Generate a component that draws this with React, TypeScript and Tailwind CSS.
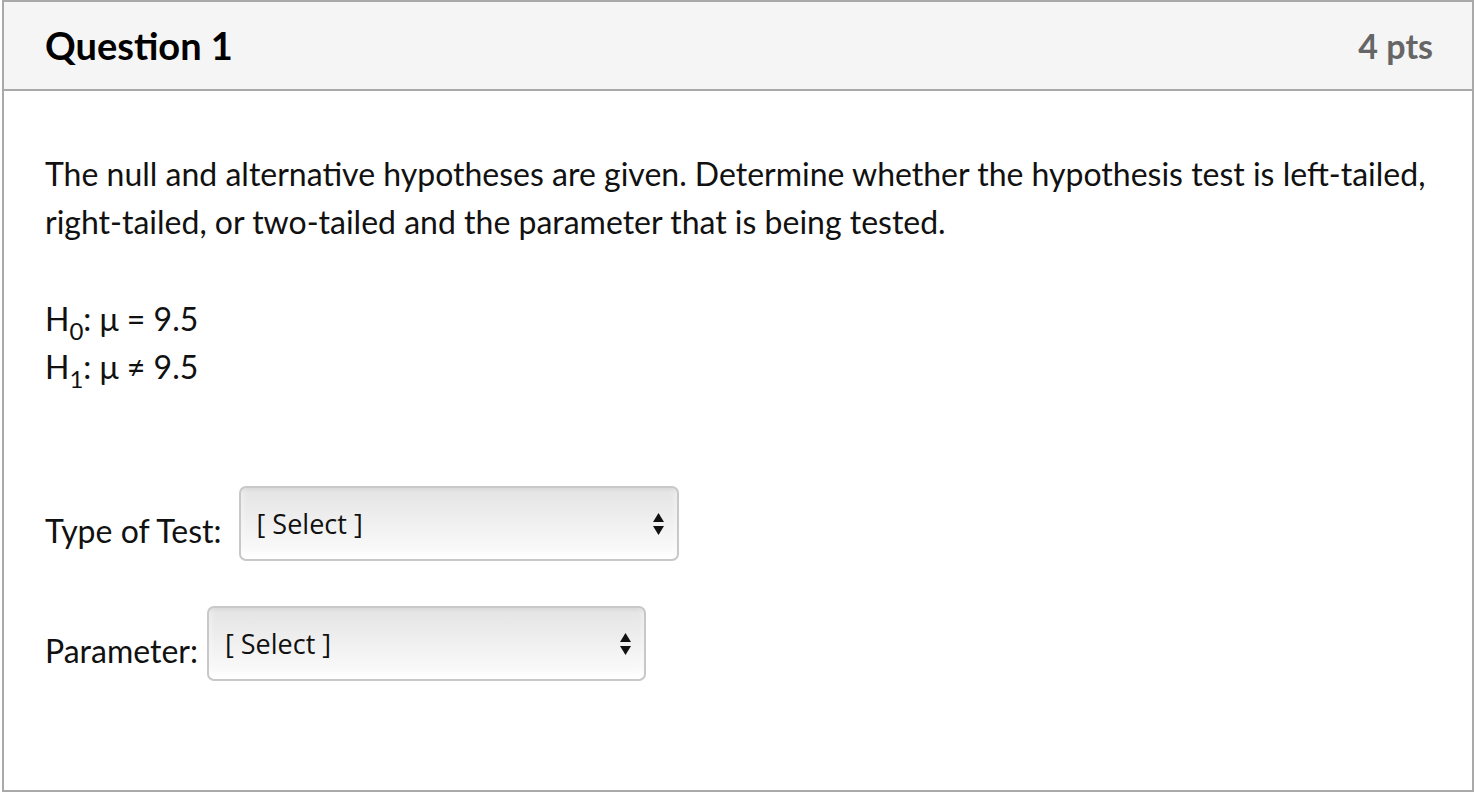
import React from "react";

function SelectBox({ width }: { width: string }) {
  return (
    <div
      className={`relative ${width} h-[75px] rounded-[7px] border-2 border-[#c8c8c8] bg-gradient-to-b from-[#e4e4e4] via-[#f0f0f0] to-[#fdfdfd] shadow-[inset_0_-4px_6px_rgba(255,255,255,0.9),inset_0_2px_3px_rgba(0,0,0,0.06)] flex items-start pl-[16px] pt-[20px]`}
    >
      <span className="text-[27px] leading-[32px] text-[#111] font-['Open_Sans',sans-serif]">[ Select ]</span>
      <svg className="absolute right-[13px] top-[25px]" width="11" height="22" viewBox="0 0 11 22">
        <path d="M5.5 0 L11 9 L0 9 Z" fill="#111" />
        <path d="M0 13 L11 13 L5.5 22 Z" fill="#111" />
      </svg>
    </div>
  );
}

export default function App() {
  return (
    <div className="w-[1474px] h-[796px] bg-white pl-[2px] font-['Lato',sans-serif]">
      <div className="w-[1472px] h-[792px] border-2 border-[#a9a9a9] flex flex-col">
        <div className="h-[89px] bg-[#f5f5f5] border-b-2 border-[#a9a9a9] flex items-center justify-between pl-[41px] pr-[39px] shrink-0">
          <span className="text-[38px] font-bold text-black">Question 1</span>
          <span className="text-[34px] font-bold text-[#666]">4 pts</span>
        </div>
        <div className="pl-[41px] pr-[40px] pt-[59px] text-[32px] leading-[48px] text-[#111]">
          <p>
            The null and alternative hypotheses are given. Determine whether the hypothesis test is left-tailed,
            right-tailed, or two-tailed and the parameter that is being tested.
          </p>
          <div className="mt-[49px]">
            <div>
              H<sub className="text-[24px] leading-none align-[-3px]">0</sub>: μ = 9.5
            </div>
            <div>
              H<sub className="text-[24px] leading-none align-[-3px]">1</sub>: μ ≠ 9.5
            </div>
          </div>
          <div className="mt-[95px] flex items-start gap-[17px]">
            <span className="pt-[21px]">Type of Test:</span>
            <SelectBox width="w-[440px]" />
          </div>
          <div className="mt-[45px] flex items-start gap-[9px]">
            <span className="pt-[21px]">Parameter:</span>
            <SelectBox width="w-[439px]" />
          </div>
        </div>
      </div>
    </div>
  );
}
